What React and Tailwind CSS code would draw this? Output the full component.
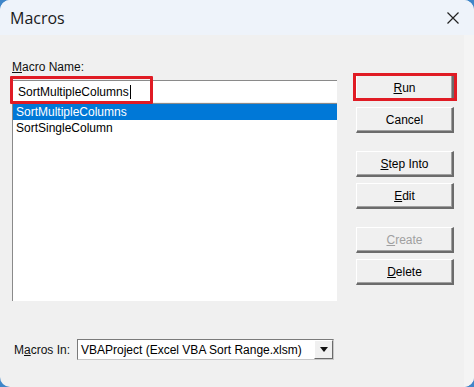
import React from "react";

const Btn = ({ children, disabled, className = "" }) => (
  <div
    className={`h-[26px] w-[98px] flex items-center justify-center bg-[#f0f0f0] border-t border-l border-t-white border-l-white border-b-2 border-r-2 border-b-[#6b6b6b] border-r-[#6b6b6b] shadow-[inset_-1px_-1px_0_#a0a0a0] text-[12px] ${disabled ? "text-[#a0a0a0]" : "text-black"} ${className}`}
  >
    {children}
  </div>
);

export default function App() {
  return (
    <div className="w-[474px] h-[387px] bg-[#3f86c9] overflow-hidden" style={{ fontFamily: "'Liberation Sans', Arial, sans-serif" }}>
      <div className="w-[474px] h-[387px] rounded-[10px] overflow-hidden flex flex-col bg-[#f0f0f0]">
        <div className="h-[35px] bg-[#eef3fa] flex items-center justify-between pl-[10px] pr-[12px] shrink-0">
          <span className="text-[16px] text-[#1a1a1a]" style={{ fontFamily: "'Open Sans', sans-serif" }}>Macros</span>
          <svg width="14" height="14" viewBox="0 0 14 14" className="mr-[2px]">
            <path d="M1.5 1.5 L12.5 12.5 M12.5 1.5 L1.5 12.5" stroke="#222" strokeWidth="1.2" />
          </svg>
        </div>
        <div className="flex-1 flex border-r-[10px] border-r-[#f4f4f4]">
          <div className="w-[344px] pl-[12px] flex flex-col">
            <div className="mt-[24px] h-[16px] text-[12px] leading-[16px] text-[#111]"><span className="underline">M</span>acro Name:</div>
            <div className="relative mt-[5px] h-[22px] w-[325px] bg-white border-t border-t-[#8a8a8a] border-l border-l-[#8a8a8a] flex items-center pl-[5px] text-[12px] text-black">
              SortMultipleColumns<span className="inline-block w-px h-[14px] bg-black ml-[1px]" />
              <div className="absolute left-[-3px] top-[-5px] w-[143px] h-[28px] border-[3px] border-[#e01b24] rounded-[1px]" />
            </div>
            <div className="mt-px h-[198px] w-[325px] bg-white border-t border-t-[#8a8a8a] border-l border-l-[#8a8a8a] text-[12px]">
              <div className="h-[16px] bg-[#0078d7] text-white pl-[3px] leading-[16px]">SortMultipleColumns</div>
              <div className="h-[16px] text-black pl-[3px] leading-[16px]">SortSingleColumn</div>
            </div>
            <div className="mt-[38px] flex items-center">
              <span className="text-[12px] text-[#111] ml-[2px] w-[63px]">M<span className="underline">a</span>cros In:</span>
              <div className="h-[21px] w-[257px] bg-white border-t border-l border-t-[#7a7a7a] border-l-[#7a7a7a] border-b border-r border-b-[#c8c8c8] border-r-[#c8c8c8] flex items-center">
                <span className="flex-1 pl-[3px] text-[12px] text-black">VBAProject (Excel VBA Sort Range.xlsm)</span>
                <div className="w-[19px] h-[19px] bg-[#f0f0f0] border-t border-l border-t-white border-l-white border-b border-r border-b-[#6b6b6b] border-r-[#6b6b6b] flex items-center justify-center">
                  <svg width="8" height="5" viewBox="0 0 8 5"><path d="M0 0 H8 L4 5 Z" fill="#111" /></svg>
                </div>
              </div>
            </div>
          </div>
          <div className="flex flex-col pl-[12px] pt-[40px]">
            <div className="relative">
              <Btn><span><span className="underline">R</span>un</span></Btn>
              <div className="absolute left-[-3px] top-[-2px] w-[104px] h-[28px] border-[3px] border-[#e01b24]" />
            </div>
            <Btn className="mt-[6px]">Cancel</Btn>
            <Btn className="mt-[18px]"><span><span className="underline">S</span>tep Into</span></Btn>
            <Btn className="mt-[6px]"><span><span className="underline">E</span>dit</span></Btn>
            <Btn disabled className="mt-[18px]"><span><span className="underline">C</span>reate</span></Btn>
            <Btn className="mt-[6px]"><span><span className="underline">D</span>elete</span></Btn>
          </div>
        </div>
      </div>
    </div>
  );
}
